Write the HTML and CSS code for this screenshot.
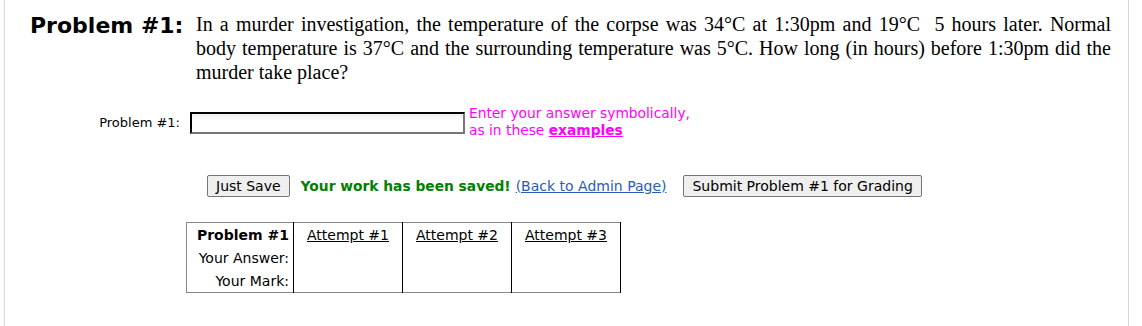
FILE: index.html
```html
<!DOCTYPE html>
<html>
<head>
<meta charset="utf-8">
<link rel="stylesheet" href="styles.css">
</head>
<body>
<div class="page">
  <div class="problem">
    <div class="ptitle">Problem #1:</div>
    <div class="ptext">In a murder investigation, the temperature of the corpse was 34°C at 1:30pm and 19°C &nbsp;5 hours later. Normal body temperature is 37°C and the surrounding temperature was 5°C. How long (in hours) before 1:30pm did the murder take place?</div>
  </div>
  <div class="answer">
    <div class="alabel">Problem #1:</div>
    <input class="ainput" type="text">
    <div class="hint">Enter your answer symbolically,<br>as in these <a class="ex" href="#">examples</a></div>
  </div>
  <div class="actions">
    <button class="btn">Just Save</button>
    <span class="saved">Your work has been saved!</span>
    <a class="back" href="#">(Back to Admin Page)</a>
    <button class="btn submit">Submit Problem #1 for Grading</button>
  </div>
  <table class="attempts">
    <tr><th class="rowhead">Problem #1</th><td class="att"><a href="#">Attempt #1</a></td><td class="att"><a href="#">Attempt #2</a></td><td class="att"><a href="#">Attempt #3</a></td></tr>
    <tr><td class="rowhead">Your Answer:</td><td class="att"></td><td class="att"></td><td class="att"></td></tr>
    <tr><td class="rowhead">Your Mark:</td><td class="att"></td><td class="att"></td><td class="att"></td></tr>
  </table>
</div>
</body>
</html>
```
FILE: styles.css
```css
html, body { margin: 0; padding: 0; background: #fff; }
body { font-family: "DejaVu Sans", Verdana, sans-serif; color: #000; }
.page {
  margin: 0 13px 0 4px;
  border-left: 1px solid #d8d8d8;
  border-right: 1px solid #d8d8d8;
  height: 326px;
  box-sizing: border-box;
}
.problem { display: flex; padding: 12px 17px 0 25px; }
.ptitle { font-weight: bold; font-size: 22px; white-space: nowrap; width: 166px; flex: none; line-height: 28px; }
.ptext {
  font-family: "Liberation Serif", "Times New Roman", serif;
  font-size: 20px; line-height: 24px; text-align: justify; flex: 1;
}
.answer { display: flex; align-items: center; margin-top: 22px; }
.alabel { font-size: 13px; width: 185px; text-align: right; padding-right: 10px; box-sizing: border-box; }
.ainput {
  width: 275px; height: 22px; box-sizing: border-box; margin: 0;
  border: 2px inset #777; border-top-color: #222; border-left-color: #222; border-bottom-color: #777; border-right-color: #777;
  background: linear-gradient(#f0f0f0, #fff 40%);
}
.hint { color: #f0f; font-size: 13.8px; line-height: 17px; margin-left: 4px; margin-top: -1px; }
.ex { color: #f0f; font-weight: bold; }
.actions { display: flex; align-items: center; margin: 36px 0 0 202px; font-size: 14px; }
.btn {
  font-family: "DejaVu Sans", Verdana, sans-serif; font-size: 14px;
  background: #efefef; border: 1px solid #767676; border-radius: 2px; padding: 0 8px; height: 22px; color: #000;
}
.saved { color: #008000; font-weight: bold; margin-left: 11px; font-size: 13.8px; }
.back { color: #2a5db0; margin-left: 5px; }
.submit { margin-left: 17px; }
.attempts {
  margin: 25px 0 0 181px; border-collapse: collapse; border: 1px solid #888; font-size: 14px;
}
.attempts td, .attempts th { padding: 0 4px; height: 23px; }
.rowhead { text-align: right; border-right: 1px solid #000; width: 98px; }
th.rowhead { font-weight: bold; }
.att { width: 100px; text-align: center; border-right: 1px solid #000; vertical-align: middle; }
.att a { color: #000; }
```
